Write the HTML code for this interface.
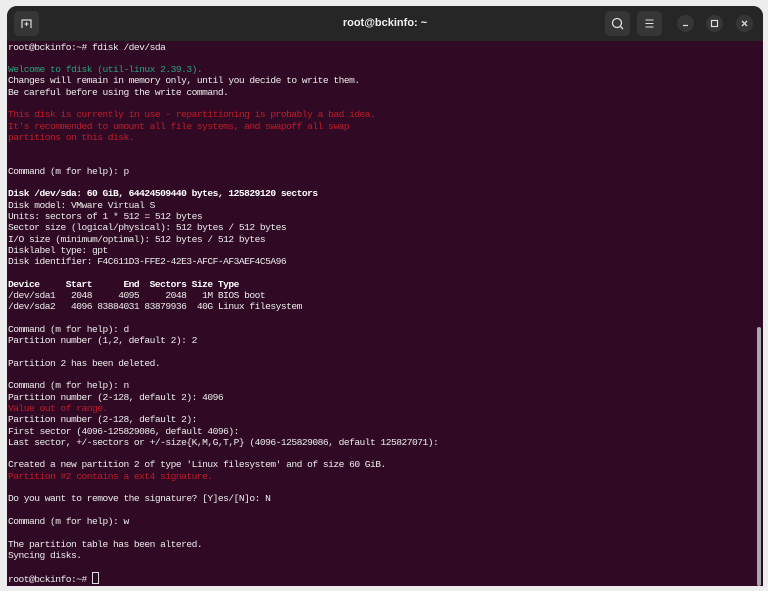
<!DOCTYPE html>
<html><head><meta charset="utf-8"><style>
html,body{margin:0;padding:0;width:768px;height:591px;overflow:hidden;background:#ededed;}
.win{position:absolute;left:7px;top:6px;width:756px;height:580px;background:#300a24;border-radius:10px 10px 0 0;overflow:hidden;}
.tb{position:absolute;left:0;top:0;width:756px;height:35px;background:#262626;}
.title{position:absolute;left:0;right:0;top:0;text-align:center;color:#f0f0f0;font:bold 11px "Liberation Sans",sans-serif;line-height:35px;}
.btn{position:absolute;top:5px;width:25px;height:25px;background:#363636;border-radius:5px;}
.cb{position:absolute;top:9px;width:17px;height:17px;background:#363636;border-radius:50%;}
pre{position:absolute;left:1px;top:35.5px;margin:0;font-family:"Liberation Mono",monospace;font-size:9.6px;letter-spacing:-0.51px;line-height:11.3px;color:#ececec;}
.g{color:#2aa17a}.r{color:#c01c28}b{font-weight:bold;color:#fff}
.sb{position:absolute;left:750px;top:321px;width:4px;height:259px;background:#a8a8a8;border-radius:2px;}
</style></head><body>
<div class="win">
<div class="tb">
<div class="btn" style="left:7px"><svg width="25" height="25"><path d="M8 17V9h9v8" stroke="#ddd" fill="none" stroke-width="1.2"/><path d="M12.5 11v4M10.5 13h4" stroke="#ddd" stroke-width="1.1"/></svg></div>
<div class="title">root@bckinfo: ~</div>
<div class="btn" style="left:598px"><svg width="25" height="25"><circle cx="12" cy="12" r="4.5" stroke="#ddd" fill="none" stroke-width="1.3"/><path d="M15 15l3 3" stroke="#ddd" stroke-width="1.3"/></svg></div>
<div class="btn" style="left:630px"><svg width="25" height="25"><path d="M8.5 9h8M8.5 12.5h8M8.5 16h8" stroke="#ddd" stroke-width="1.1"/></svg></div>
<div class="cb" style="left:670px"><svg width="17" height="17"><path d="M6 10.5h5" stroke="#ddd" stroke-width="1.2"/></svg></div>
<div class="cb" style="left:699px"><svg width="17" height="17"><rect x="5.5" y="5.5" width="6" height="6" stroke="#ddd" fill="none" stroke-width="1.2"/></svg></div>
<div class="cb" style="left:729px"><svg width="17" height="17"><path d="M6 6l5 5M11 6l-5 5" stroke="#ddd" stroke-width="1.3"/></svg></div>
</div>
<pre>root@bckinfo:~# fdisk /dev/sda

<span class="g">Welcome to fdisk (util-linux 2.39.3).</span>
Changes will remain in memory only, until you decide to write them.
Be careful before using the write command.

<span class="r">This disk is currently in use - repartitioning is probably a bad idea.
It's recommended to umount all file systems, and swapoff all swap
partitions on this disk.</span>


Command (m for help): p

<b>Disk /dev/sda: 60 GiB, 64424509440 bytes, 125829120 sectors</b>
Disk model: VMware Virtual S
Units: sectors of 1 * 512 = 512 bytes
Sector size (logical/physical): 512 bytes / 512 bytes
I/O size (minimum/optimal): 512 bytes / 512 bytes
Disklabel type: gpt
Disk identifier: F4C611D3-FFE2-42E3-AFCF-AF3AEF4C5A96

<b>Device     Start      End  Sectors Size Type</b>
/dev/sda1   2048     4095     2048   1M BIOS boot
/dev/sda2   4096 83884031 83879936  40G Linux filesystem

Command (m for help): d
Partition number (1,2, default 2): 2

Partition 2 has been deleted.

Command (m for help): n
Partition number (2-128, default 2): 4096
<span class="r">Value out of range.</span>
Partition number (2-128, default 2):
First sector (4096-125829086, default 4096):
Last sector, +/-sectors or +/-size{K,M,G,T,P} (4096-125829086, default 125827071):

Created a new partition 2 of type 'Linux filesystem' and of size 60 GiB.
<span class="r">Partition #2 contains a ext4 signature.</span>

Do you want to remove the signature? [Y]es/[N]o: N

Command (m for help): w

The partition table has been altered.
Syncing disks.

root@bckinfo:~# <span style="display:inline-block;width:5px;height:10px;border:1px solid #ddd;vertical-align:-2px"></span></pre>
<div class="sb"></div>
</div>
</body></html>
